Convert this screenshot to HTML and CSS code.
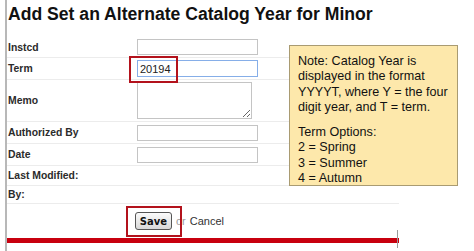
FILE: index.html
```html
<!DOCTYPE html>
<html lang="en">
<head>
    <meta charset="UTF-8">
    <title>Alternate Catalog Year</title>
    <link rel="stylesheet" href="styles.css">
</head>
<body>
    <div class="panel">
        <h2 class="title">Add Set an Alternate Catalog Year for Minor</h2>

        <form class="form-grid">
            <div class="row">
                <label class="lbl">Instcd</label>
                <input type="text" class="field">
            </div>
            <div class="row">
                <label class="lbl">Term</label>
                <input type="text" class="field focused" value="20194">
            </div>
            <div class="row memo-row">
                <label class="lbl">Memo</label>
                <textarea class="memo"></textarea>
            </div>
            <div class="row">
                <label class="lbl">Authorized By</label>
                <input type="text" class="field">
            </div>
            <div class="row">
                <label class="lbl">Date</label>
                <input type="text" class="field">
            </div>
            <div class="row short">
                <label class="lbl">Last Modified:</label>
            </div>
            <div class="row shorter">
                <label class="lbl">By:</label>
            </div>

            <div class="actions">
                <button type="button" class="save-btn">Save</button>
                <span class="or">or</span>
                <a class="cancel">Cancel</a>
            </div>
        </form>
        <div class="red-bar"></div>

        <!-- callout highlights -->
        <div class="hl hl-term"></div>
        <div class="hl hl-save"></div>
        <div class="bar-end"></div>

        <div class="note">
            <p>Note: Catalog Year is<br>displayed in the format<br>YYYYT, where Y = the four<br>digit year, and T = term.</p>
            <p>Term Options:<br>2 = Spring<br>3 = Summer<br>4 = Autumn</p>
        </div>
    </div>
</body>
</html>
```

FILE: styles.css
```css
body {
    margin: 0;
    background: #ffffff;
    font-family: "Liberation Sans", Arial, sans-serif;
    color: #222222;
}

.panel {
    position: relative;
    margin-left: 5px;
    width: 392px;
    border-left: 2px solid #b8b8b8;
    height: 251px;
}

.title {
    margin: 0;
    padding: 4px 0 0 1px;
    height: 37px;
    box-sizing: border-box;
    font-size: 17.6px;
    font-weight: bold;
    color: #111111;
}

.form-grid {
    margin: 0;
}

.row {
    display: flex;
    align-items: center;
    height: 21px;
    border-bottom: 1px solid #ececec;
    box-sizing: border-box;
}
.row:nth-child(2),
.row:nth-child(4),
.row:nth-child(5) {
    height: 22px;
}
.memo-row {
    height: 42px;
}
.row.short {
    height: 20px;
}
.row.shorter {
    height: 18px;
}

.lbl {
    width: 129px;
    padding-left: 1px;
    font-size: 10.4px;
    font-weight: bold;
    color: #2b2b2b;
}

.field {
    width: 121px;
    height: 16px;
    margin: 0;
    padding: 0 2px;
    border: 1px solid #c4c4c4;
    box-sizing: border-box;
    font-family: "Liberation Sans", Arial, sans-serif;
    font-size: 11px;
    color: #222222;
}
.field.focused {
    height: 17px;
    border-color: #86aee8;
    outline: none;
}

.memo {
    width: 115px;
    height: 37px;
    margin: 0;
    border: 1px solid #c4c4c4;
    box-sizing: border-box;
    resize: both;
}

.actions {
    display: flex;
    align-items: center;
    height: 34px;
    padding-left: 128px;
    gap: 4px;
    font-size: 11px;
}

.save-btn {
    width: 37px;
    height: 18px;
    padding: 0;
    border: 1px solid #555555;
    border-radius: 3px;
    background: linear-gradient(to bottom, #fbfbfb, #d8d8d8);
    font-family: "DejaVu Sans", Verdana, sans-serif;
    font-size: 10px;
    font-weight: bold;
    color: #111111;
}

.or {
    color: #9a9a9a;
}

.cancel {
    color: #333333;
    font-size: 11px;
}

.red-bar {
    height: 5px;
    background: #c8000f;
}

.bar-end {
    position: absolute;
    left: 390px;
    top: 230px;
    width: 1px;
    height: 18px;
    background: #9a9a9a;
}

.hl {
    position: absolute;
    border: 2px solid #b3121c;
}
.hl-term {
    left: 122px;
    top: 56px;
    width: 45px;
    height: 23px;
}
.hl-save {
    left: 119px;
    top: 206px;
    width: 52px;
    height: 27px;
}

.note {
    position: absolute;
    left: 282px;
    top: 45px;
    width: 169px;
    height: 141px;
    box-sizing: border-box;
    padding: 8px 0 0 8px;
    background: #fde8ab;
    border: 1px solid #a99b72;
    font-size: 12.6px;
    line-height: 15.3px;
    white-space: nowrap;
    color: #111111;
}
.note p {
    margin: 0 0 10px;
}
```
